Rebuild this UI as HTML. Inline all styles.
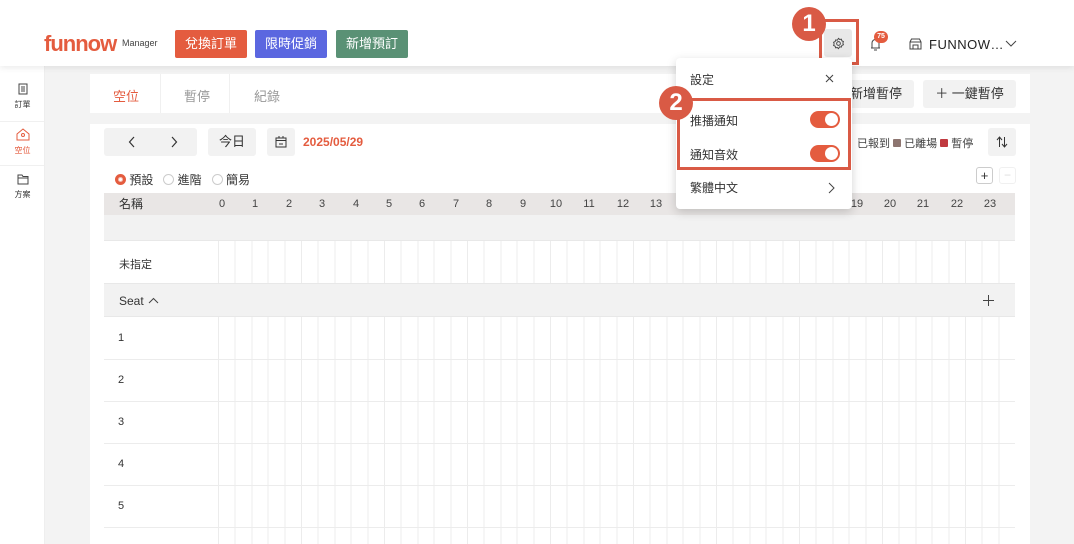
<!DOCTYPE html><html><head><meta charset="utf-8"><style>
*{box-sizing:border-box;margin:0;padding:0}
body{width:1074px;height:544px;overflow:hidden;background:#f3f3f3;font-family:"Liberation Sans","Noto Sans CJK TC",sans-serif;color:#333;position:relative;font-size:12px}
.abs{position:absolute}
.hdr{left:0;top:0;width:1074px;height:66px;background:#fff;box-shadow:0 2px 6px rgba(0,0,0,.08);z-index:2}
.btn{position:absolute;top:30px;height:28px;color:#fff;font-size:13px;line-height:28px;text-align:center;border-radius:2px;width:72px}
.side{left:0;top:66px;width:45px;height:478px;background:#fff;border-right:1px solid #eee}
.si{position:absolute;left:0;width:45px;text-align:center;font-size:8px;line-height:12px}
.gb{background:#f2f2f2;border-radius:3px;position:absolute;text-align:center}
.row{position:absolute;left:104px;width:911px}
.hr span{position:absolute;top:0;width:20px;text-align:center}
</style></head><body>
<div class="abs hdr">
<div class="abs" style="left:44px;top:31px;font-size:22px;font-weight:bold;color:#e45c3f;letter-spacing:-1px">funnow</div>
<div class="abs" style="left:122px;top:38px;font-size:9px;color:#444">Manager</div>
<div class="btn" style="left:175px;background:#e45c3f">兌換訂單</div>
<div class="btn" style="left:255px;background:#5b67e0">限時促銷</div>
<div class="btn" style="left:336px;background:#5a9175">新增預訂</div>
<div class="abs" style="left:824px;top:29px;width:28px;height:28px;background:#e8e8e8;border-radius:3px"></div>
<svg class="abs" style="left:832px;top:37px" width="13" height="13" viewBox="0 0 14 14"><circle cx="7" cy="7" r="2" fill="none" stroke="#444"/><path d="M7 1.5l1.3 1.2 1.8-.4.5 1.8 1.7.8-.6 1.7.6 1.7-1.7.8-.5 1.8-1.8-.4L7 12.5 5.7 11.3l-1.8.4-.5-1.8-1.7-.8.6-1.7-.6-1.7 1.7-.8.5-1.8 1.8.4z" fill="none" stroke="#444" stroke-width="1"/></svg>
<div class="abs" style="left:819px;top:19px;width:40px;height:46px;border:3px solid #d95a45"></div>
<div class="abs" style="left:792px;top:7px;width:34px;height:34px;border-radius:50%;background:#d95a45;color:#fff;font-size:24px;font-weight:bold;text-align:center;line-height:34px">1</div>
<svg class="abs" style="left:869px;top:37px" width="13" height="14" viewBox="0 0 13 14"><path d="M2 11h9M3 11V6a3.5 3.5 0 017 0v5M5 13h3" fill="none" stroke="#444"/></svg>
<div class="abs" style="left:874px;top:31px;width:14px;height:12px;border-radius:6px;background:#e45c3f;color:#fff;font-size:7px;font-weight:bold;text-align:center;line-height:12px">75</div>
<svg class="abs" style="left:909px;top:38px" width="13" height="12" viewBox="0 0 13 12"><path d="M1 4l1.5-3h8L12 4v7H1zM1 4h11M4 11V7h5v4" fill="none" stroke="#444"/></svg>
<div class="abs" style="left:929px;top:37px;font-size:13px;letter-spacing:0.5px;color:#222">FUNNOW…</div>
<svg class="abs" style="left:1005px;top:40px" width="12" height="7"><path d="M1 1l5 5 5-5" fill="none" stroke="#444"/></svg>
</div>
<div class="abs side">
<div class="si" style="top:17px"><svg width="10" height="12"><rect x="1" y="1" width="8" height="10" fill="none" stroke="#444"/><path d="M3 4h4M3 6h4M3 8h4" stroke="#444"/></svg><div>訂單</div></div>
<div class="abs" style="left:0;top:55px;width:44px;height:1px;background:#f0f0f0"></div>
<div class="si" style="top:62px;color:#e45c3f"><svg width="14" height="13"><path d="M1 6l6-5 6 5v6H1z" fill="none" stroke="#e45c3f"/><circle cx="7" cy="7" r="1.5" fill="none" stroke="#e45c3f"/></svg><div>空位</div></div>
<div class="abs" style="left:0;top:99px;width:44px;height:1px;background:#f0f0f0"></div>
<div class="si" style="top:108px"><svg width="12" height="11"><path d="M1 1h4l1 1.5h5V10H1zM1 4h10" fill="none" stroke="#444"/></svg><div>方案</div></div>
</div>
<div class="abs" style="left:90px;top:74px;width:940px;height:39px;background:#fff"></div>
<div class="abs" style="left:113px;top:86px;font-size:13px;color:#e45c3f">空位</div>
<div class="abs" style="left:160px;top:74px;width:1px;height:39px;background:#f0f0f0"></div>
<div class="abs" style="left:184px;top:86px;font-size:13px;color:#999">暫停</div>
<div class="abs" style="left:229px;top:74px;width:1px;height:39px;background:#f0f0f0"></div>
<div class="abs" style="left:254px;top:86px;font-size:13px;color:#999">紀錄</div>
<div class="gb" style="left:840px;top:80px;width:74px;height:28px;line-height:28px;font-size:13px;text-align:right;padding-right:12px">新增暫停</div>
<div class="gb" style="left:923px;top:80px;width:93px;height:28px;line-height:28px;font-size:13px">＋ 一鍵暫停</div>
<div class="abs" style="left:90px;top:124px;width:940px;height:420px;background:#fff"></div>
<div class="gb" style="left:104px;top:128px;width:93px;height:28px"><svg style="position:absolute;left:24px;top:8px" width="8" height="12"><path d="M6 1L1.5 6 6 11" fill="none" stroke="#333" stroke-width="1.2"/></svg><svg style="position:absolute;left:66px;top:8px" width="8" height="12"><path d="M2 1l4.5 5L2 11" fill="none" stroke="#333" stroke-width="1.2"/></svg></div>
<div class="gb" style="left:208px;top:128px;width:48px;height:28px;line-height:28px;font-size:13px">今日</div>
<div class="gb" style="left:267px;top:128px;width:28px;height:28px"><svg style="margin-top:8px" width="12" height="12"><rect x="1" y="2" width="10" height="9" fill="none" stroke="#333"/><path d="M1 4.5h10M4 0v2M8 0v2M4 8h4" stroke="#333"/></svg></div>
<div class="abs" style="left:303px;top:135px;font-size:12px;font-weight:bold;color:#e45c3f">2025/05/29</div>
<div class="abs" style="left:857px;top:135px;font-size:11px;color:#444">已報到 <span style="display:inline-block;width:8px;height:8px;background:#8d7570;border-radius:1px"></span> 已離場 <span style="display:inline-block;width:8px;height:8px;background:#c0393f;border-radius:1px"></span> 暫停</div>
<div class="gb" style="left:988px;top:128px;width:28px;height:28px"><svg style="margin-top:8px" width="12" height="12"><path d="M3.5 11V1.5M1 4l2.5-3L6 4M8.5 1v9.5M6 8l2.5 3L11 8" fill="none" stroke="#333"/></svg></div>
<div class="abs" style="left:115px;top:171px;font-size:12px"><span style="display:inline-block;width:11px;height:11px;border-radius:50%;border:3px solid #e45c3f;vertical-align:-1px;box-shadow:0 0 0 1px #f3b9ad inset"></span> 預設 &nbsp; <span style="display:inline-block;width:11px;height:11px;border-radius:50%;border:1px solid #ccc;vertical-align:-1px"></span> 進階 &nbsp; <span style="display:inline-block;width:11px;height:11px;border-radius:50%;border:1px solid #ccc;vertical-align:-1px"></span> 簡易</div>
<div class="abs" style="left:976px;top:167px;width:17px;height:17px;border:1px solid #ccc;border-radius:3px;text-align:center;line-height:15px;font-size:13px">+</div>
<div class="abs" style="left:999px;top:167px;width:17px;height:17px;border:1px solid #f0f0f0;border-radius:3px;text-align:center;line-height:15px;color:#ddd">−</div>
<div class="row" style="top:193px;height:22px;background:#e9e6e5"><span class="abs" style="left:15px;top:4px;font-size:12px;line-height:14px">名稱</span>
<div class="hr" style="position:absolute;left:108px;top:4px;font-size:11px;line-height:14px;color:#444;width:801px">
<span style="left:0px">0</span><span style="left:33px">1</span><span style="left:67px">2</span><span style="left:100px">3</span><span style="left:134px">4</span><span style="left:167px">5</span><span style="left:200px">6</span><span style="left:234px">7</span><span style="left:267px">8</span><span style="left:301px">9</span><span style="left:334px">10</span><span style="left:367px">11</span><span style="left:401px">12</span><span style="left:434px">13</span><span style="left:635px">19</span><span style="left:668px">20</span><span style="left:701px">21</span><span style="left:735px">22</span><span style="left:768px">23</span></div></div>
<div class="row" style="top:215px;height:26px;background:#f2f2f2;border-bottom:1px solid #e8e8e8"></div>
<div class="row" style="top:241px;height:42px;background:#fff"><span class="abs" style="left:15px;top:15px;font-size:11px">未指定</span></div>
<div class="row" style="top:283px;height:34px;background:#f2f2f2;border-top:1px solid #e8e8e8;border-bottom:1px solid #e8e8e8"><span class="abs" style="left:15px;top:10px;font-size:12px">Seat</span><svg class="abs" style="left:44px;top:13px" width="11" height="7"><path d="M1 6l4.5-4.5L10 6" fill="none" stroke="#444"/></svg><svg class="abs" style="left:879px;top:11px" width="11" height="11"><path d="M5.5 0v11M0 5.5h11" stroke="#444"/></svg></div>
<div class="row" style="top:317px;height:227px;background:#fff"></div>
<div class="abs" style="left:118px;top:332px;font-size:11px">1</div>
<div class="abs" style="left:118px;top:374px;font-size:11px">2</div>
<div class="abs" style="left:118px;top:416px;font-size:11px">3</div>
<div class="abs" style="left:118px;top:458px;font-size:11px">4</div>
<div class="abs" style="left:118px;top:500px;font-size:11px">5</div>
<svg class="abs" style="left:104px;top:241px" width="911" height="303">
<g stroke="#ececec" stroke-width="1">
<line x1="0" y1="118.5" x2="911" y2="118.5"/><line x1="0" y1="160.5" x2="911" y2="160.5"/><line x1="0" y1="202.5" x2="911" y2="202.5"/><line x1="0" y1="244.5" x2="911" y2="244.5"/><line x1="0" y1="286.5" x2="911" y2="286.5"/>
<path id="vl" d="M114.5 0V42M131 0V42M148 0V42M164 0V42M181 0V42M197.5 0V42M214 0V42M231 0V42M247 0V42M264 0V42M280.5 0V42M297 0V42M314 0V42M330 0V42M347 0V42M363.5 0V42M380 0V42M397 0V42M413 0V42M430 0V42M446.5 0V42M463 0V42M480 0V42M496 0V42M513 0V42M529.5 0V42M546 0V42M563 0V42M579 0V42M596 0V42M612.5 0V42M629 0V42M646 0V42M662 0V42M679 0V42M695.5 0V42M712 0V42M729 0V42M745 0V42M762 0V42M778.5 0V42M795 0V42M812 0V42M828 0V42M845 0V42M861.5 0V42M878 0V42M895 0V42"/>
<use href="#vl" y="76"/><use href="#vl" y="118"/><use href="#vl" y="160"/><use href="#vl" y="202"/><use href="#vl" y="244"/><use href="#vl" y="286"/>
</g></svg>
<div class="abs" style="left:676px;top:58px;width:176px;height:151px;background:#fff;border-radius:4px;box-shadow:0 3px 10px rgba(0,0,0,.18);z-index:3">
<div class="abs" style="left:14px;top:13px;font-size:12px">設定</div>
<svg class="abs" style="left:149px;top:16px" width="9" height="9"><path d="M1 1l7 7M8 1L1 8" stroke="#444" stroke-width="1.1"/></svg>
<div class="abs" style="left:14px;top:54px;font-size:12px">推播通知</div>
<div class="abs" style="left:134px;top:53px;width:30px;height:17px;border-radius:9px;background:#e45c3f"><div style="position:absolute;right:2px;top:2px;width:13px;height:13px;border-radius:50%;background:#fff"></div></div>
<div class="abs" style="left:14px;top:88px;font-size:12px">通知音效</div>
<div class="abs" style="left:134px;top:87px;width:30px;height:17px;border-radius:9px;background:#e45c3f"><div style="position:absolute;right:2px;top:2px;width:13px;height:13px;border-radius:50%;background:#fff"></div></div>
<div class="abs" style="left:14px;top:121px;font-size:12px">繁體中文</div>
<svg class="abs" style="left:152px;top:124px" width="7" height="12"><path d="M1 1l5 5-5 5" fill="none" stroke="#444"/></svg>
<div class="abs" style="left:1px;top:40px;width:174px;height:72px;border:3px solid #d95a45"></div>
</div>
<div class="abs" style="left:659px;top:86px;width:34px;height:34px;border-radius:50%;background:#d95a45;color:#fff;font-size:24px;font-weight:bold;text-align:center;line-height:34px;z-index:4">2</div>
</body></html>
